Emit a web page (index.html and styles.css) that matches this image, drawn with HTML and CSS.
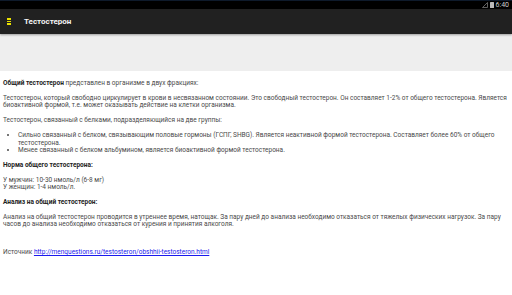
FILE: index.html
```html
<!DOCTYPE html>
<html lang="ru">
<head>
    <meta charset="UTF-8">
    <title>Тестостерон</title>
    <link rel="stylesheet" href="styles.css">
</head>
<body>
    <div class="statusbar">
        <svg class="signal" width="6" height="6" viewBox="0 0 6 6">
            <path d="M5.5 0.5 L5.5 5.5 L0.5 5.5 Z" fill="none" stroke="#777" stroke-width="0.8"/>
        </svg>
        <span class="battery"></span>
        <span class="clock">6:40</span>
    </div>

    <div class="actionbar">
        <span class="menu-icon">
            <span></span><span></span><span></span>
        </span>
        <span class="title">Тестостерон</span>
    </div>

    <div class="spacer"></div>

    <div class="article">
        <p><b>Общий тестостерон</b> представлен в организме в двух фракциях:</p>
        <p>Тестостерон, который свободно циркулирует в крови в несвязанном состоянии. Это свободный тестостерон. Он составляет 1-2% от общего тестостерона. Является биоактивной формой, т.е. может оказывать действие на клетки организма.</p>
        <p>Тестостерон, связанный с белками, подразделяющийся на две группы:</p>
        <ul>
            <li>Сильно связанный с белком, связывающим половые гормоны (ГСПГ, SHBG). Является неактивной формой тестостерона. Составляет более 60% от общего тестостерона.</li>
            <li>Менее связанный с белком альбумином, является биоактивной формой тестостерона.</li>
        </ul>
        <p><b>Норма общего тестостерона:</b></p>
        <p>У мужчин: 10-30 нмоль/л (6-8 мг)<br>У женщин: 1-4 нмоль/л.</p>
        <p><b>Анализ на общий тестостерон:</b></p>
        <p>Анализ на общий тестостерон проводится в утреннее время, натощак. За пару дней до анализа необходимо отказаться от тяжелых физических нагрузок. За пару часов до анализа необходимо отказаться от курения и принятия алкоголя.</p>
        <p class="source">Источник <a href="#">http://menquestions.ru/testosteron/obshhii-testosteron.html</a></p>
    </div>
</body>
</html>
```

FILE: styles.css
```css
body {
    margin: 0;
    font-family: Roboto, "Noto Sans", sans-serif;
    background-color: #fff;
}

/* Status bar */
.statusbar {
    height: 9px;
    background-color: #000;
    border-top: 1px solid #0e1a2b;
    box-sizing: border-box;
    display: flex;
    justify-content: flex-end;
    align-items: center;
    gap: 2px;
    padding-right: 3px;
}

.battery {
    width: 4px;
    height: 6px;
    background-color: #bbb;
    border-radius: 0.5px;
}

.clock {
    color: #ccc;
    font-size: 7px;
    line-height: 7px;
}

/* Action bar */
.actionbar {
    height: 25px;
    background-color: #212121;
    display: flex;
    align-items: center;
    box-shadow: 0 1px 2px rgba(0, 0, 0, 0.35);
    position: relative;
}

.menu-icon {
    display: flex;
    flex-direction: column;
    gap: 1px;
    margin-left: 7px;
    margin-right: 13px;
}

.menu-icon span {
    width: 4px;
    height: 1.5px;
    background-color: #e8e000;
}

.title {
    color: #f4f4f4;
    font-size: 8px;
    font-weight: bold;
}

.spacer {
    height: 37px;
    background-color: #eee;
}

/* Article */
.article {
    padding: 9px 3px 0 3px;
    font-size: 6.5px;
    line-height: 7.6px;
    color: #4a4a4a;
}

.article p {
    margin: 0 0 7.2px 0;
}

.article b {
    color: #222;
}

.article ul {
    margin: 0 0 7.2px 0;
    padding-left: 15px;
}

.article a {
    color: #1a1aee;
}

.source {
    margin-top: 20px !important;
}
```
